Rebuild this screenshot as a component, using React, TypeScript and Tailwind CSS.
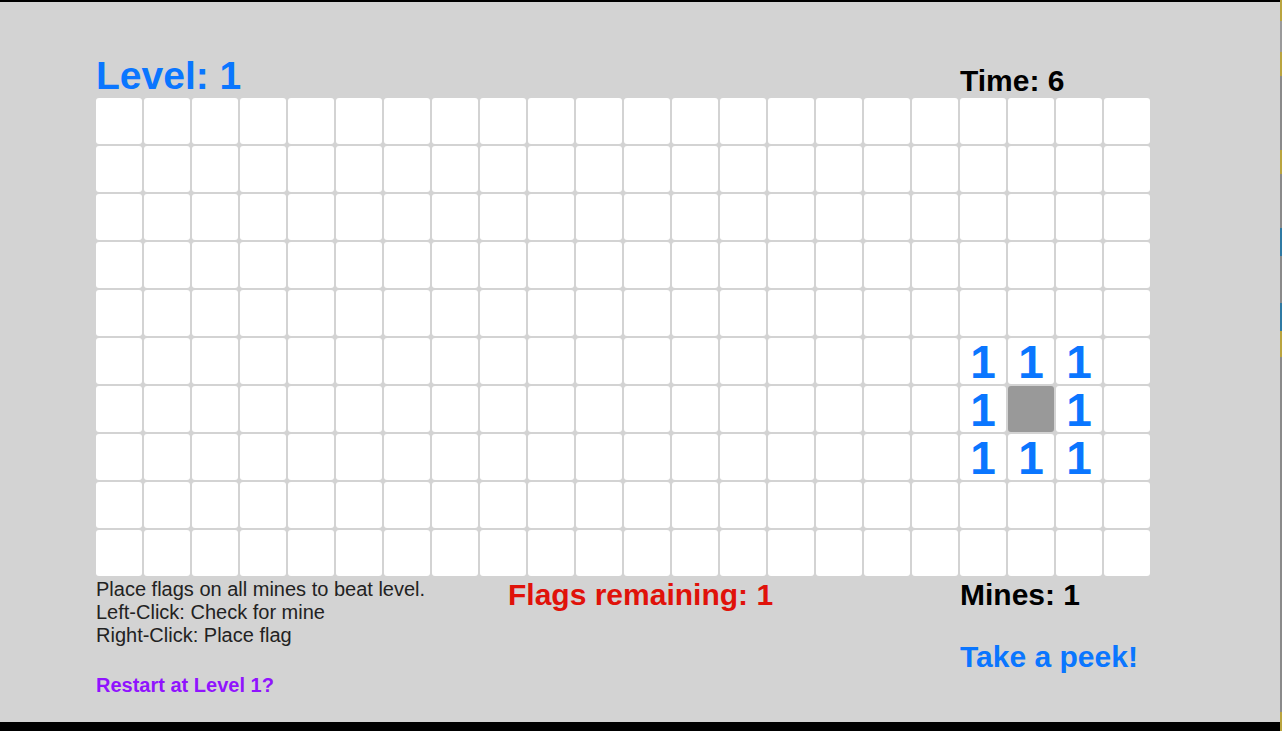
import React from "react";

const ROWS = 10;
const COLS = 22;

function cellContent(r: number, c: number): "gray" | "one" | null {
  if (r === 6 && c === 19) return "gray";
  if (r >= 5 && r <= 7 && c >= 18 && c <= 20) return "one";
  return null;
}

const stripSegments: { h: number; color: string }[] = [
  { h: 21, color: "#b9a43f" },
  { h: 31, color: "#9a9a9a" },
  { h: 24, color: "#b9a43f" },
  { h: 74, color: "#8a8a8a" },
  { h: 24, color: "#b9a43f" },
  { h: 54, color: "#8a8a8a" },
  { h: 28, color: "#2f7aa3" },
  { h: 47, color: "#8a8a8a" },
  { h: 28, color: "#2f7aa3" },
  { h: 26, color: "#b9a43f" },
  { h: 355, color: "#8a8a8a" },
  { h: 19, color: "#b9a43f" },
];

export default function App() {
  const cells: React.ReactNode[] = [];
  for (let r = 0; r < ROWS; r++) {
    for (let c = 0; c < COLS; c++) {
      const k = cellContent(r, c);
      if (k === "gray") {
        cells.push(<div key={`${r}-${c}`} className="h-[46px] w-[46px] rounded-[3px] bg-[#999999]" />);
      } else {
        cells.push(
          <div
            key={`${r}-${c}`}
            className="flex h-[46px] w-[46px] items-center justify-center rounded-[3px] bg-white"
          >
            {k === "one" && (
              <span className="mt-[2px] text-[46px] font-bold leading-none text-[#0a76ff]">1</span>
            )}
          </div>
        );
      }
    }
  }

  return (
    <div
      className="flex h-[731px] w-full overflow-hidden"
      style={{ fontFamily: '"Liberation Sans", Arial, sans-serif' }}
    >
      <div className="flex min-h-0 flex-1 flex-col">
        <div className="h-[2px] shrink-0 bg-black" />
        <div className="min-h-0 flex-1 overflow-hidden bg-[#d3d3d3] pl-[96px] pt-[51px]">
          <div className="flex items-end">
            <div className="w-[864px] text-[39px] font-bold leading-[45px] text-[#0a76ff]">Level: 1</div>
            <div className="text-[30px] font-bold leading-[34px] text-black">Time: 6</div>
          </div>
          <div className="grid w-max grid-cols-[repeat(22,46px)] gap-[2px]">{cells}</div>
          <div className="mt-[2px] grid grid-cols-[412px_452px_192px]">
            <div>
              <div className="text-[20px] leading-[23px] text-[#222222]">
                <div>Place flags on all mines to beat level.</div>
                <div>Left-Click: Check for mine</div>
                <div>Right-Click: Place flag</div>
              </div>
              <div className="mt-[27px] text-[20px] font-bold leading-[23px] text-[#9013fe]">
                Restart at Level 1?
              </div>
            </div>
            <div className="text-[30px] font-bold leading-[34px] text-[#e0120a]">Flags remaining: 1</div>
            <div>
              <div className="text-[30px] font-bold leading-[34px] text-black">Mines: 1</div>
              <div className="mt-[28px] text-[30px] font-bold leading-[34px] text-[#0a76ff]">Take a peek!</div>
            </div>
          </div>
        </div>
        <div className="h-[9px] shrink-0 bg-black" />
      </div>
      <div className="flex w-[2px] shrink-0 flex-col">
        {stripSegments.map((s, i) => (
          <div key={i} className="shrink-0" style={{ height: s.h, backgroundColor: s.color }} />
        ))}
      </div>
    </div>
  );
}
